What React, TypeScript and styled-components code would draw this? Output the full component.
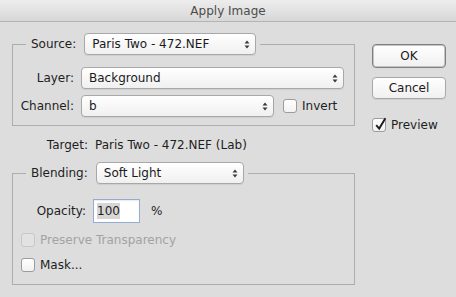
import React from 'react';
import styled, { createGlobalStyle } from 'styled-components';

const GlobalStyle = createGlobalStyle`
    html, body {
        margin: 0;
        padding: 0;
        background: #dddddd;
    }
    body {
        font-family: "DejaVu Sans", "Liberation Sans", sans-serif;
        font-size: 12px;
        color: #1e1e1e;
    }
`;

interface WidthProps {
    $width: number;
}

interface CheckProps {
    $disabled?: boolean;
}

const Window = styled.div`
    width: 456px;
    height: 297px;
    background: #dddddd;
    display: flex;
    flex-direction: column;
    overflow: hidden;
`;

const TitleBar = styled.div`
    height: 21px;
    border-bottom: 1px solid #b4b4b4;
    background: linear-gradient(#ededed, #d7d7d7);
    color: #4c4c4c;
    display: flex;
    align-items: center;
    justify-content: center;
`;

const Body = styled.div`
    display: flex;
    padding: 11px 0 0 12px;
`;

const MainColumn = styled.div`
    width: 343px;
    display: flex;
    flex-direction: column;
`;

const SideColumn = styled.div`
    width: 74px;
    margin-left: 17px;
    padding-top: 11px;
    display: flex;
    flex-direction: column;
`;

const Group = styled.fieldset<{ $top: number; $bottom: number }>`
    margin: 0;
    padding: ${props => props.$top}px 0 ${props => props.$bottom}px 0;
    border: 1px solid #adadad;
    min-inline-size: 0;
    display: flex;
    flex-direction: column;
`;

const Legend = styled.legend`
    margin-left: 13px;
    padding: 0 4px 0 5px;
    display: flex;
    align-items: center;
    gap: 8px;
`;

const Rows = styled.div`
    display: flex;
    flex-direction: column;
    gap: 6px;
`;

const Row = styled.div`
    display: flex;
    align-items: center;
`;

const Label = styled.span<WidthProps>`
    width: ${props => props.$width}px;
    margin-right: 7px;
    text-align: right;
    white-space: nowrap;
`;

const SelectBox = styled.div<WidthProps>`
    box-sizing: border-box;
    width: ${props => props.$width}px;
    height: 22px;
    padding: 0 5px 0 7px;
    display: flex;
    align-items: center;
    justify-content: space-between;
    border: 1px solid #a8a8a8;
    border-radius: 4px;
    background: linear-gradient(#ffffff, #f0f0f0);
    box-shadow: 0 1px 1px rgba(0, 0, 0, 0.07);
    color: #1a1a1a;
    white-space: nowrap;
`;

const TargetRow = styled.div`
    display: flex;
    align-items: center;
    height: 14px;
    margin: 12px 0 10px 0;
    padding-left: 13px;
`;

const OpacityRow = styled.div`
    display: flex;
    align-items: center;
    padding-left: 13px;
`;

const NumberField = styled.div`
    box-sizing: border-box;
    width: 47px;
    height: 24px;
    padding-left: 3px;
    display: flex;
    align-items: center;
    background: #ffffff;
    border: 1px solid #93acd2;
    box-shadow: inset 0 1px 1px rgba(0, 0, 0, 0.08);
`;

const Selected = styled.span`
    background: #d6d6d6;
    line-height: 16px;
`;

const Unit = styled.span`
    margin-left: 11px;
`;

const CheckRows = styled.div`
    display: flex;
    flex-direction: column;
    gap: 11px;
    margin-top: 10px;
    padding-left: 8px;
`;

const CheckRow = styled.label<CheckProps>`
    display: flex;
    align-items: center;
    gap: 5px;
    height: 14px;
    color: ${props => (props.$disabled ? '#a3a3a3' : '#1e1e1e')};
`;

const Box = styled.span<CheckProps>`
    position: relative;
    box-sizing: border-box;
    width: 14px;
    height: 14px;
    border: 1px solid ${props => (props.$disabled ? '#c8c8c8' : '#9c9c9c')};
    border-radius: 3px;
    background: ${props => (props.$disabled ? '#e2e2e2' : 'linear-gradient(#ffffff, #f2f2f2)')};
    flex: none;
`;

const CheckMark = styled.svg`
    position: absolute;
    left: 1px;
    top: -3px;
`;

const InvertCheck = styled(CheckRow)`
    margin-left: 9px;
`;

const Button = styled.div<{ $default?: boolean }>`
    box-sizing: border-box;
    height: ${props => (props.$default ? 24 : 22)}px;
    display: flex;
    align-items: center;
    justify-content: center;
    border: 1px solid ${props => (props.$default ? '#808080' : '#a8a8a8')};
    border-radius: 4px;
    background: linear-gradient(#ffffff, #f0f0f0);
    box-shadow: ${props => (props.$default ? 'inset 0 0 0 1px #c4c4c4' : '0 1px 1px rgba(0,0,0,0.07)')};
    color: #1a1a1a;
    margin-bottom: 9px;
`;

const PreviewCheck = styled(CheckRow)`
    margin-top: 10px;
`;

const Arrows = () => (
    <svg width="6" height="11" viewBox="0 0 6 11">
        <polygon points="0.5,4.5 3,1.5 5.5,4.5" fill="#3a3a3a" />
        <polygon points="0.5,6.5 3,9.5 5.5,6.5" fill="#3a3a3a" />
    </svg>
);

const Select = ({ width, value }: { width: number; value: string }) => (
    <SelectBox $width={width}>
        <span>{value}</span>
        <Arrows />
    </SelectBox>
);

const Checkbox = ({ checked, disabled }: { checked?: boolean; disabled?: boolean }) => (
    <Box $disabled={disabled}>
        {checked && (
            <CheckMark width="14" height="16" viewBox="0 0 14 16">
                <path d="M2.2 9.2 L5.2 12.6 L11.4 2.2" fill="none" stroke="#1c1c1c" strokeWidth="1.9" />
            </CheckMark>
        )}
    </Box>
);

export default function App() {
    return (
        <Window>
            <GlobalStyle />
            <TitleBar>Apply Image</TitleBar>
            <Body>
                <MainColumn>
                    <Group $top={12} $bottom={8}>
                        <Legend>
                            <span>Source:</span>
                            <Select width={172} value="Paris Two - 472.NEF" />
                        </Legend>
                        <Rows>
                            <Row>
                                <Label $width={61}>Layer:</Label>
                                <Select width={263} value="Background" />
                            </Row>
                            <Row>
                                <Label $width={61}>Channel:</Label>
                                <Select width={193} value="b" />
                                <InvertCheck>
                                    <Checkbox />
                                    <span>Invert</span>
                                </InvertCheck>
                            </Row>
                        </Rows>
                    </Group>

                    <TargetRow>
                        <Label $width={63}>Target:</Label>
                        <span>Paris Two - 472.NEF (Lab)</span>
                    </TargetRow>

                    <Group $top={15} $bottom={12}>
                        <Legend>
                            <span>Blending:</span>
                            <Select width={148} value="Soft Light" />
                        </Legend>
                        <OpacityRow>
                            <Label $width={60}>Opacity:</Label>
                            <NumberField>
                                <Selected>100</Selected>
                            </NumberField>
                            <Unit>%</Unit>
                        </OpacityRow>
                        <CheckRows>
                            <CheckRow $disabled>
                                <Checkbox disabled />
                                <span>Preserve Transparency</span>
                            </CheckRow>
                            <CheckRow>
                                <Checkbox />
                                <span>Mask...</span>
                            </CheckRow>
                        </CheckRows>
                    </Group>
                </MainColumn>

                <SideColumn>
                    <Button $default>OK</Button>
                    <Button>Cancel</Button>
                    <PreviewCheck>
                        <Checkbox checked />
                        <span>Preview</span>
                    </PreviewCheck>
                </SideColumn>
            </Body>
        </Window>
    );
}
